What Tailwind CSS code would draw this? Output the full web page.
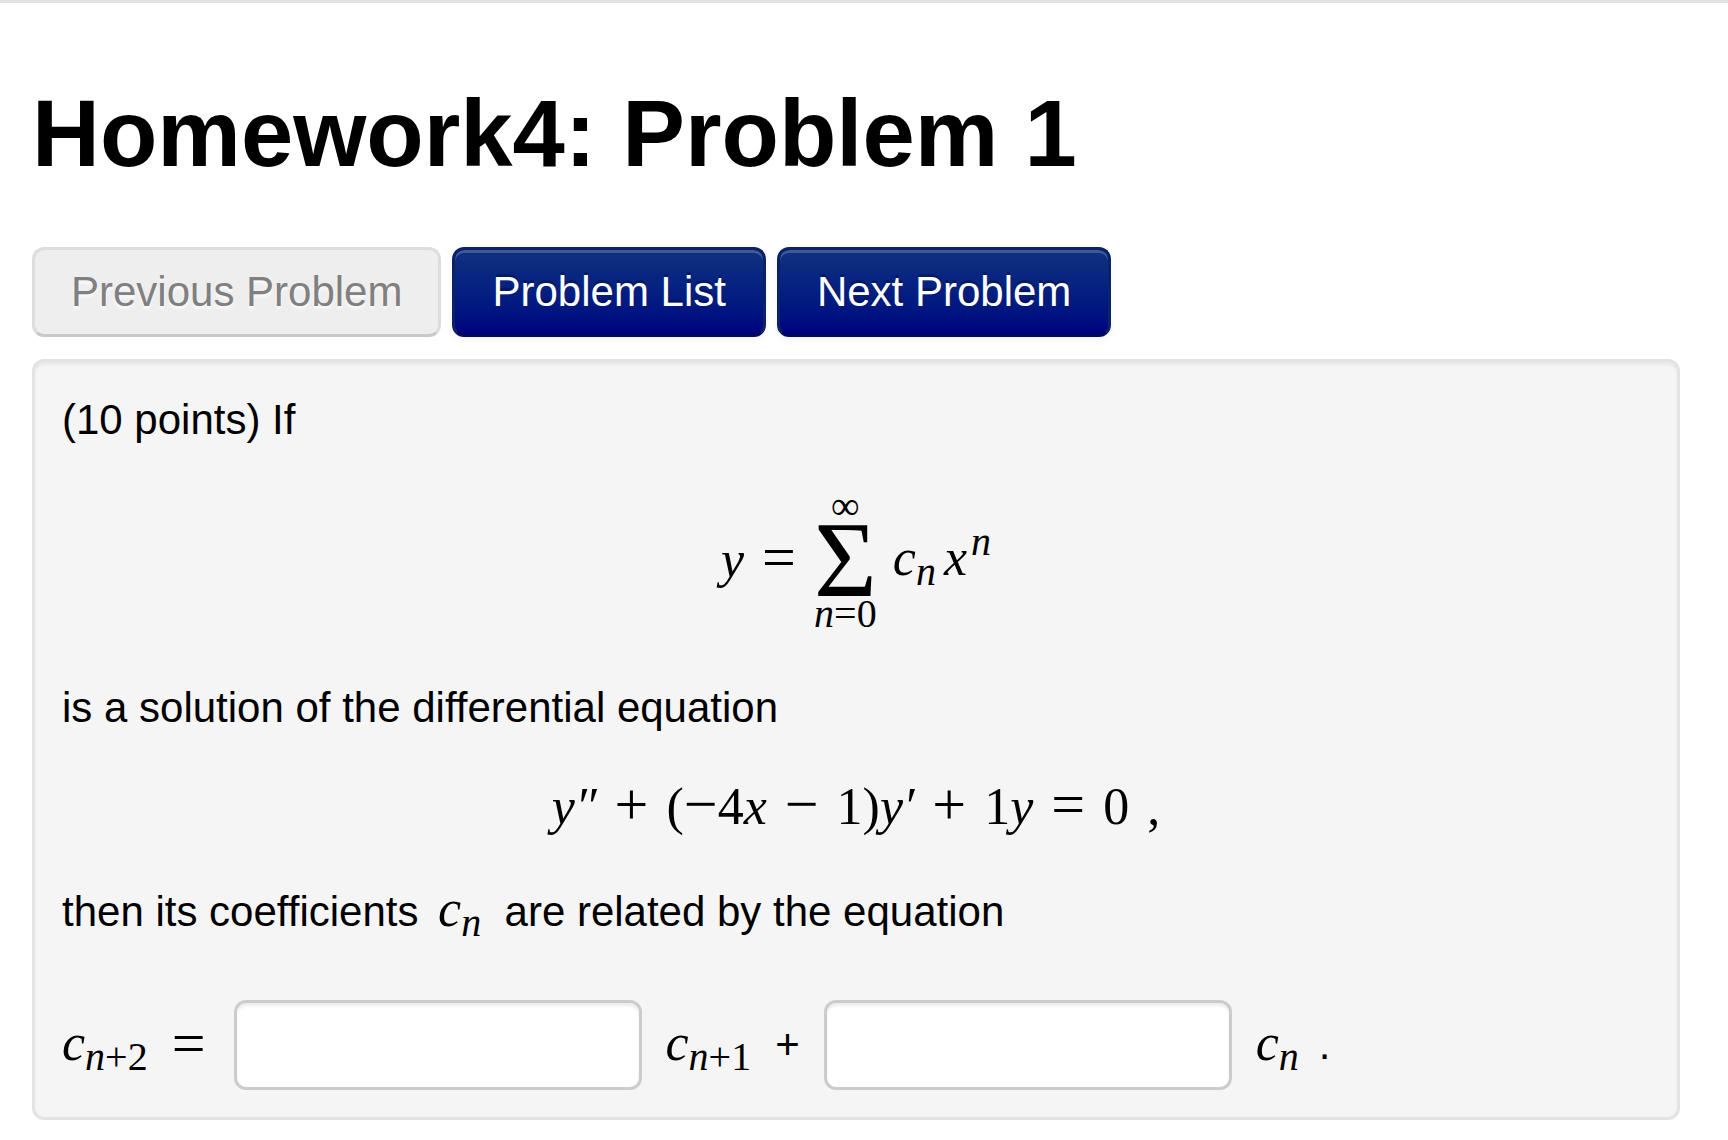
<!DOCTYPE html>
<html lang="en">

<head>
  <meta charset="UTF-8">
  <meta name="viewport" content="width=device-width, initial-scale=1.0">
  <title>Homework4: Problem 1</title>
  <script src="https://cdn.jsdelivr.net/npm/@tailwindcss/browser@4"></script>
</head>

<body class="bg-white text-black text-[42px] leading-[60px] font-['Liberation_Sans',Arial,sans-serif]">
  <main class="border-t-3 border-[#e3e3e3] pl-8 pr-12 pt-[71px] pb-5">
    <h1 class="text-[94px] leading-[120px] font-bold">Homework4: Problem 1</h1>

    <!-- Navigation -->
    <nav class="flex flex-wrap gap-[11px] mt-[53px]">
      <button type="button" disabled
        class="px-9 py-3 rounded-xl border-3 border-[#dddddd] border-b-[#c9c9c9] bg-[#eeeeee] text-[#808080] [text-shadow:0_3px_3px_rgba(255,255,255,0.75)]">Previous Problem</button>
      <a href="#"
        class="px-[37px] py-3 rounded-xl border-3 border-[#0b2265] border-b-[#020a58] bg-linear-to-b from-[#123080] to-[#000080] text-white shadow-[inset_0_3px_0_rgba(255,255,255,0.2),0_3px_6px_rgba(0,0,0,0.05)] [text-shadow:0_-3px_0_rgba(0,0,0,0.25)]">Problem List</a>
      <a href="#"
        class="px-[37px] py-3 rounded-xl border-3 border-[#0b2265] border-b-[#020a58] bg-linear-to-b from-[#123080] to-[#000080] text-white shadow-[inset_0_3px_0_rgba(255,255,255,0.2),0_3px_6px_rgba(0,0,0,0.05)] [text-shadow:0_-3px_0_rgba(0,0,0,0.25)]">Next Problem</a>
    </nav>

    <!-- Problem body -->
    <form class="mt-[22px] px-[27px] pt-7 pb-[27px] rounded-xl border-3 border-[#e3e3e3] bg-[#f5f5f5] shadow-[inset_0_3px_3px_rgba(0,0,0,0.05)]">
      <p>(10 points) If</p>

      <div class="flex justify-center items-center mt-[38px] h-[144px] text-[52px] font-['Liberation_Serif','Times_New_Roman',serif]">
        <div class="flex items-baseline pb-1">
          <i>y</i>
          <span class="text-[60px] mx-[18px]">=</span>
        </div>
        <div class="flex flex-col items-center text-[40px] leading-[36px]">
          <span>∞</span>
          <span class="text-[108px] leading-[72px]">Σ</span>
          <span><i>n</i>=0</span>
        </div>
        <div class="flex items-baseline gap-2 ml-4 pb-1">
          <span><i>c</i><sub class="text-[40px]"><i>n</i></sub></span>
          <span><i>x</i><sup class="text-[40px] ml-1"><i>n</i></sup></span>
        </div>
      </div>

      <p class="mt-[46px]">is a solution of the differential equation</p>

      <div class="flex justify-center items-baseline mt-9 text-[52px] font-['Liberation_Serif','Times_New_Roman',serif]">
        <i>y″</i>
        <span class="text-[60px] mx-[18px]">+</span>
        <span>(</span>
        <span class="text-[60px]">−</span>
        <span>4<i>x</i></span>
        <span class="text-[60px] mx-[18px]">−</span>
        <span>1)<i>y′</i></span>
        <span class="text-[60px] mx-[18px]">+</span>
        <span>1<i>y</i></span>
        <span class="text-[60px] mx-[18px]">=</span>
        <span>0</span>
        <span class="ml-[18px]">,</span>
      </div>

      <p class="mt-[42px]">then its coefficients <span class="ml-2 text-[52px] font-['Liberation_Serif','Times_New_Roman',serif]"><i>c</i><sub class="text-[40px]"><i>n</i></sub></span>&nbsp; are related by the equation</p>

      <div class="flex flex-wrap items-center mt-[58px]">
        <label for="coef1" class="pb-1 text-[52px] font-['Liberation_Serif','Times_New_Roman',serif]"><i>c</i><sub class="text-[40px]"><i>n</i>+2</sub></label>
        <span class="ml-6 mr-7 pb-1 text-[60px] font-['Liberation_Serif','Times_New_Roman',serif]">=</span>
        <input type="text" id="coef1" name="coef1"
          class="w-[408px] h-[90px] px-4 rounded-xl border-3 border-[#cccccc] bg-white shadow-[inset_0_3px_3px_rgba(0,0,0,0.075)]" />
        <label for="coef2" class="ml-6 pb-1 text-[52px] font-['Liberation_Serif','Times_New_Roman',serif]"><i>c</i><sub class="text-[40px]"><i>n</i>+1</sub></label>
        <span class="mx-6">+</span>
        <input type="text" id="coef2" name="coef2"
          class="w-[408px] h-[90px] px-4 rounded-xl border-3 border-[#cccccc] bg-white shadow-[inset_0_3px_3px_rgba(0,0,0,0.075)]" />
        <span class="ml-6 pb-1 text-[52px] font-['Liberation_Serif','Times_New_Roman',serif]"><i>c</i><sub class="text-[40px]"><i>n</i></sub></span>
        <span class="ml-5">.</span>
      </div>
    </form>
  </main>
</body>

</html>
